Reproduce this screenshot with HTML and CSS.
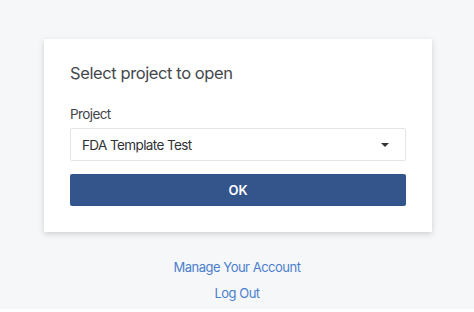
FILE: index.html
```html
<!DOCTYPE html>
<html>
<head>
<meta charset="utf-8">
<link rel="stylesheet" href="styles.css">
</head>
<body>
<div class="page">
  <div class="card">
    <h1 class="title">Select project to open</h1>
    <label class="label">Project</label>
    <div class="select">
      <span class="select-value">FDA Template Test</span>
      <span class="caret"></span>
    </div>
    <button class="btn">OK</button>
  </div>
  <div class="links">
    <a class="link">Manage Your Account</a>
    <a class="link">Log Out</a>
  </div>
</div>
</body>
</html>
```
FILE: styles.css
```css
html, body {
  margin: 0;
  padding: 0;
  background: #ffffff;
}
body {
  font-family: Inter, "Noto Sans", sans-serif;
}
.page {
  width: 474px;
  height: 309px;
  background: #f6f7f9;
  padding-top: 39px;
  box-sizing: border-box;
  display: flex;
  flex-direction: column;
  align-items: center;
}
.card {
  width: 388px;
  margin-left: 2px;
  box-sizing: border-box;
  background: #ffffff;
  padding: 24px 26px 26px 26px;
  box-shadow: 0 2px 6px rgba(0, 0, 0, 0.16);
  display: flex;
  flex-direction: column;
}
.title {
  margin: 0;
  font-size: 16.5px;
  letter-spacing: -0.4px;
  font-weight: 400;
  line-height: 20px;
  color: #44484c;
}
.label {
  margin-top: 23px;
  font-size: 13.5px;
  letter-spacing: -0.6px;
  line-height: 17px;
  color: #404448;
}
.select {
  margin-top: 5px;
  height: 33px;
  box-sizing: border-box;
  border: 1px solid #e3e5e8;
  border-radius: 2px;
  display: flex;
  align-items: center;
  padding: 0 16px 0 11px;
}
.select-value {
  flex: 1;
  font-size: 13.5px;
  letter-spacing: -0.6px;
  color: #2f3235;
}
.caret {
  width: 0;
  height: 0;
  border-left: 4px solid transparent;
  border-right: 4px solid transparent;
  border-top: 4px solid #333;
}
.btn {
  margin-top: 13px;
  height: 32px;
  border: none;
  border-radius: 2px;
  background: #34558b;
  color: #ffffff;
  font-family: Inter, "Noto Sans", sans-serif;
  font-size: 13px;
  font-weight: 600;
  padding: 0;
}
.links {
  margin-top: 27px;
  display: flex;
  flex-direction: column;
  align-items: center;
  gap: 9px;
}
.link {
  font-size: 13px;
  letter-spacing: -0.5px;
  line-height: 17px;
  color: #4b7fcd;
}
```
